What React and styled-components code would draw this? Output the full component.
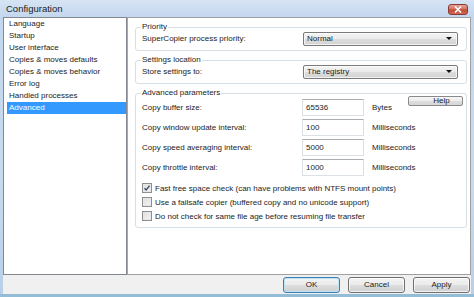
import React from "react";
import styled, { createGlobalStyle } from "styled-components";

const Global = createGlobalStyle`
  html, body { margin: 0; padding: 0; overflow: hidden; }
  body { font-family: "Liberation Sans", Arial, sans-serif; font-size: 8px; color: #1c1c1c; }
  * { box-sizing: border-box; }
`;

const Window = styled.div`
  width: 474px;
  height: 297px;
  display: flex;
  flex-direction: column;
  background: linear-gradient(180deg, #d6e4f4 0px, #c3d7ee 17px, #c8daee 60%, #b9d0e8 100%);
  border-bottom: 3px solid #93bcd6;
`;

const TitleBar = styled.div`
  height: 17px;
  flex: none;
  display: flex;
  align-items: center;
  justify-content: space-between;
  padding: 0 6px 0 6px;
`;

const Title = styled.span`
  font-size: 9.5px;
  color: #1b1b1b;
  line-height: 12px;
  margin-top: 1px;
`;

const CloseButton = styled.div`
  width: 20px;
  height: 11px;
  margin-top: 2px;
  border-radius: 3px;
  border: 1px solid #8a3b34;
  background: linear-gradient(180deg, #e5a497 0%, #d4705f 45%, #c24a36 55%, #cf6a53 100%);
  display: flex;
  align-items: center;
  justify-content: center;
`;

const Client = styled.div`
  flex: 1;
  margin: 0 3px 0 3px;
  background: #f0f0f0;
  display: flex;
  flex-direction: column;
`;

const Main = styled.div`
  height: 258px;
  display: flex;
`;

const List = styled.div`
  width: 124px;
  border: 1px solid #828790;
  background: #fff;
  display: flex;
  flex-direction: column;
`;

const ListItem = styled.div`
  height: 12px;
  line-height: 12px;
  margin: 0 0 0 3px;
  padding-left: 2px;
  white-space: nowrap;
  background: ${(p) => (p.$selected ? "#3399ff" : "transparent")};
  color: ${(p) => (p.$selected ? "#fff" : "#1c1c1c")};
`;

const Panel = styled.div`
  flex: 1;
  background: #fff;
  border: 1px solid #a0a0a0;
  border-left-color: #a8a8a8;
  padding: 5px 3px 0 7px;
  display: flex;
  flex-direction: column;
  gap: 5px;
`;

const Group = styled.fieldset`
  position: relative;
  margin: 0;
  padding: 0 8px 4px 6px;
  border: 1px solid #d5dfe5;
  border-radius: 3px;
  min-width: 0;
`;

const Legend = styled.legend`
  padding: 0 1px;
  margin-left: -1px;
  line-height: 8px;
  font-size: 8px;
`;

const Row = styled.div`
  display: flex;
  align-items: center;
  height: ${(p) => p.$h || 15}px;
`;

const Label = styled.span`
  width: ${(p) => p.$w || 160}px;
  flex: none;
  white-space: nowrap;
`;

const Select = styled.div`
  flex: 1;
  height: 14px;
  border: 1px solid #7a7a7a;
  border-radius: 2px;
  background: linear-gradient(180deg, #f4f4f4 0%, #ebebeb 48%, #dddddd 52%, #d2d2d2 100%);
  display: flex;
  align-items: center;
  justify-content: space-between;
  padding: 0 5px 0 3px;
  box-shadow: inset 0 0 0 1px rgba(255, 255, 255, 0.7);
`;

const Arrow = styled.span`
  width: 0;
  height: 0;
  border-left: 3px solid transparent;
  border-right: 3px solid transparent;
  border-top: 3px solid #111;
`;

const Input = styled.div`
  width: 62px;
  height: 17px;
  flex: none;
  border: 1px solid #dbdfe6;
  border-top-color: #abadb3;
  background: #fff;
  display: flex;
  align-items: center;
  padding-left: 3px;
`;

const Unit = styled.span`
  margin-left: 8px;
`;

const HelpButton = styled.div`
  position: absolute;
  right: 3px;
  top: -1px;
  width: 55px;
  height: 10px;
  border: 1px solid #8a8a8a;
  border-radius: 2px;
  background: linear-gradient(180deg, #f6f6f6 0%, #ececec 50%, #dedede 51%, #d6d6d6 100%);
  display: flex;
  align-items: center;
  justify-content: center;
  padding-left: 12px;
  line-height: 8px;
`;

const CheckRow = styled.div`
  display: flex;
  align-items: center;
  height: 14px;
  gap: 3px;
  white-space: nowrap;
`;

const Spacer = styled.div`
  height: 4px;
`;

const Box = styled.span`
  width: 10px;
  height: 10px;
  flex: none;
  border: 1px solid #8f8f8f;
  background: linear-gradient(135deg, #dcdcdc 0%, #f6f6f6 100%);
  box-shadow: inset 0 0 0 1px #e8e8e8;
  display: flex;
  align-items: center;
  justify-content: center;
`;

const Footer = styled.div`
  flex: 1;
  display: flex;
  justify-content: flex-end;
  align-items: center;
  gap: 8px;
  padding-right: 1px;
`;

const Button = styled.div`
  width: 57px;
  height: 16px;
  border: 1px solid ${(p) => (p.$default ? "#3c7fb1" : "#707070")};
  border-radius: 3px;
  background: linear-gradient(180deg, #f3f3f3 0%, #ebebeb 48%, #dddddd 52%, #cfcfcf 100%);
  box-shadow: inset 0 0 0 1px ${(p) => (p.$default ? "#bfe2f7" : "rgba(255,255,255,0.7)")};
  display: flex;
  align-items: center;
  justify-content: center;
`;

const items = [
  "Language",
  "Startup",
  "User interface",
  "Copies & moves defaults",
  "Copies & moves behavior",
  "Error log",
  "Handled processes",
  "Advanced",
];

const params = [
  ["Copy buffer size:", "65536", "Bytes"],
  ["Copy window update interval:", "100", "Milliseconds"],
  ["Copy speed averaging interval:", "5000", "Milliseconds"],
  ["Copy throttle interval:", "1000", "Milliseconds"],
];

const checks = [
  ["Fast free space check (can have problems with NTFS mount points)", true],
  ["Use a failsafe copier (buffered copy and no unicode support)", false],
  ["Do not check for same file age before resuming file transfer", false],
];

export default function App() {
  return (
    <>
      <Global />
      <Window>
        <TitleBar>
          <Title>Configuration</Title>
          <CloseButton>
            <svg width="8" height="7" viewBox="0 0 8 7">
              <path d="M1 0.5 L7 6.5 M7 0.5 L1 6.5" stroke="#fff" strokeWidth="1.6" />
            </svg>
          </CloseButton>
        </TitleBar>
        <Client>
          <Main>
            <List>
              {items.map((t) => (
                <ListItem key={t} $selected={t === "Advanced"}>
                  {t}
                </ListItem>
              ))}
            </List>
            <Panel>
              <Group>
                <Legend>Priority</Legend>
                <Row>
                  <Label $w={161}>SuperCopier process priority:</Label>
                  <Select>
                    <span>Normal</span>
                    <Arrow />
                  </Select>
                </Row>
              </Group>
              <Group>
                <Legend>Settings location</Legend>
                <Row>
                  <Label $w={161}>Store settings to:</Label>
                  <Select>
                    <span>The registry</span>
                    <Arrow />
                  </Select>
                </Row>
              </Group>
              <Group>
                <Legend>Advanced parameters</Legend>
                <HelpButton>Help</HelpButton>
                {params.map(([l, v, u]) => (
                  <Row key={l} $h={20}>
                    <Label>{l}</Label>
                    <Input>{v}</Input>
                    <Unit>{u}</Unit>
                  </Row>
                ))}
                <Spacer />
                {checks.map(([t, c]) => (
                  <CheckRow key={t}>
                    <Box>
                      {c && (
                        <svg width="8" height="8" viewBox="0 0 8 8">
                          <path d="M1.5 4.2 L3.2 6 L6.6 1.6" fill="none" stroke="#3a4a6a" strokeWidth="1.3" />
                        </svg>
                      )}
                    </Box>
                    <span>{t}</span>
                  </CheckRow>
                ))}
              </Group>
            </Panel>
          </Main>
          <Footer>
            <Button $default>OK</Button>
            <Button>Cancel</Button>
            <Button>Apply</Button>
          </Footer>
        </Client>
      </Window>
    </>
  );
}
